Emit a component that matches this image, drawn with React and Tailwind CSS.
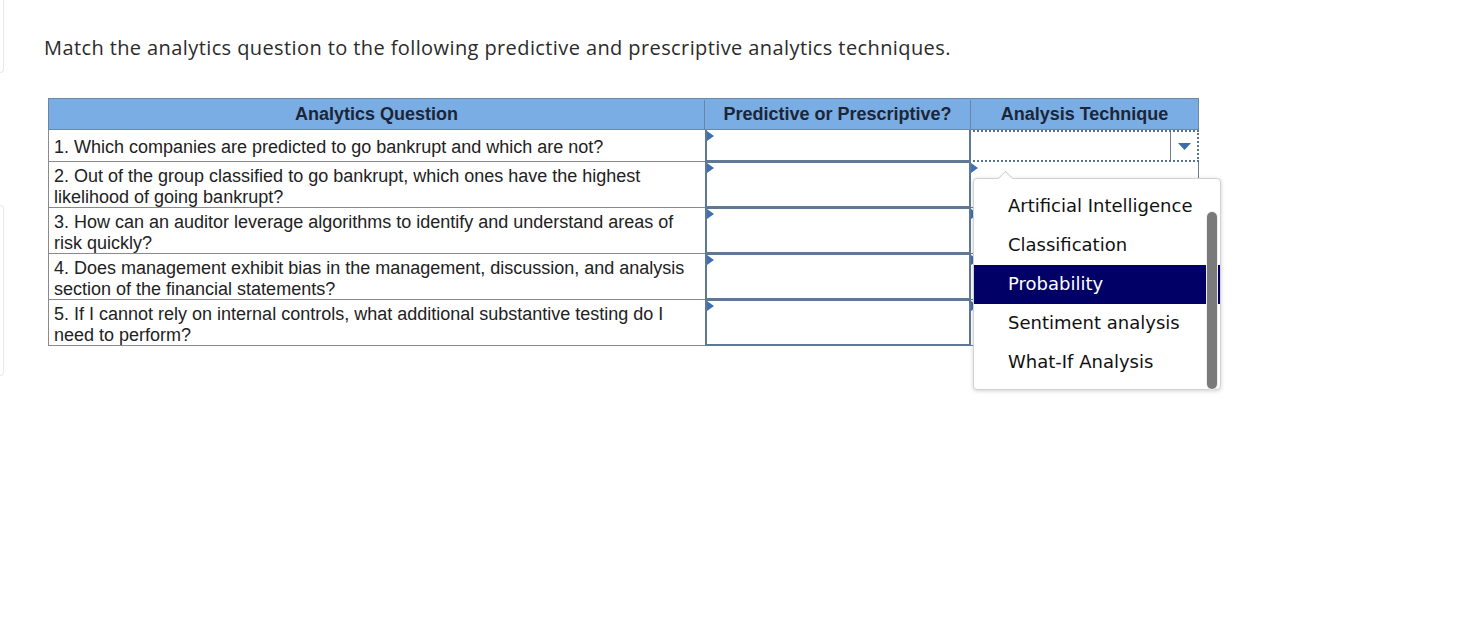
import React from 'react';

const questions = [
  { text: '1. Which companies are predicted to go bankrupt and which are not?', h: 'h-[32px]' },
  { text: '2. Out of the group classified to go bankrupt, which ones have the highest likelihood of going bankrupt?', h: 'h-[46px]' },
  { text: '3. How can an auditor leverage algorithms to identify and understand areas of risk quickly?', h: 'h-[46px]' },
  { text: '4. Does management exhibit bias in the management, discussion, and analysis section of the financial statements?', h: 'h-[46px]' },
  { text: '5. If I cannot rely on internal controls, what additional substantive testing do I need to perform?', h: 'h-[46px]' },
];

const options = ['Artificial Intelligence', 'Classification', 'Probability', 'Sentiment analysis', 'What-If Analysis'];

function Marker() {
  return (
    <svg className="absolute left-0 top-[1px]" width="7" height="10" viewBox="0 0 7 10">
      <path d="M0 0 L7 5 L0 10 Z" fill="#3f70b4" />
    </svg>
  );
}

export default function App() {
  return (
    <div className="min-h-screen bg-white flex" style={{ fontFamily: '"Liberation Sans", Arial, sans-serif' }}>
      {/* clipped neighbour cards on the left edge */}
      <div className="w-[4px] shrink-0 flex flex-col">
        <div className="h-[73px] border-r border-b border-[#e8e8e8] rounded-br-[4px]" />
        <div className="h-[132px]" />
        <div className="h-[171px] border-r border-t border-b border-[#e8e8e8] rounded-r-[4px]" />
      </div>

      <div className="pl-[40px] pt-[34px]">
        <p className="text-[20px] leading-[28px] text-[#2b2b2b] tracking-[0.4px]" style={{ fontFamily: '"Open Sans", Lato, sans-serif' }}>
          Match the analytics question to the following predictive and prescriptive analytics techniques.
        </p>

        <div className="relative ml-[4px] mt-[36px] w-[1151px]">
          {/* header */}
          <div className="flex h-[32px] bg-[#7aade4] border border-[#6c87a3] pt-[1px] text-[18px] font-bold text-[#1c2636]">
            <div className="w-[656px] flex items-center justify-center border-r border-[#6c87a3]">Analytics Question</div>
            <div className="w-[266px] flex items-center justify-center border-r border-[#6c87a3]">Predictive or Prescriptive?</div>
            <div className="flex-1 flex items-center justify-center">Analysis Technique</div>
          </div>

          {questions.map((q, i) => (
            <div key={i} className={`flex ${q.h}`}>
              <div className="w-[657px] shrink-0 flex items-center border-l border-b border-[#8a8a8a] px-[5px] pt-[4px] text-[18px] leading-[21px] text-[#222]">
                <span>{q.text}</span>
              </div>
              <div className="relative w-[266px] shrink-0 border-2 border-t-0 border-[#5f7893] bg-white">
                {i > 0 && <div className="h-[1px] bg-[#5f7893]" />}
                <Marker />
              </div>
              {i === 0 ? (
                <div className="flex-1 flex border-2 border-dotted border-[#5a7390] -ml-[2px]">
                  <div className="flex-1" />
                  <div className="w-[27px] border-l border-[#6c7f94] flex items-center justify-center">
                    <svg width="13" height="7" viewBox="0 0 13 7">
                      <path d="M0 0 L13 0 L6.5 7 Z" fill="#3d6aa8" />
                    </svg>
                  </div>
                </div>
              ) : (
                <div className="relative flex-1 border-r border-b border-[#6c7f94]">
                  <Marker />
                </div>
              )}
            </div>
          ))}

          {/* open dropdown menu */}
          <div className="absolute left-[925px] top-[80px] w-[248px] h-[212px] bg-white border border-[#d2d2d2] rounded-[4px] shadow-[0_1px_4px_rgba(0,0,0,0.18)] pt-[8px]">
            <div className="absolute left-[26px] -top-[6px] w-[11px] h-[11px] rotate-45 bg-white border-l border-t border-[#d2d2d2]" />
            {options.map((o) => (
              <div
                key={o}
                className={`relative h-[39px] flex items-center pl-[34px] pb-[2px] text-[18px] ${o === 'Probability' ? 'bg-[#000066] text-white' : 'text-[#111]'}`}
                style={{ fontFamily: '"DejaVu Sans", Verdana, sans-serif' }}
              >
                {o}
              </div>
            ))}
            <div className="absolute right-[3px] top-[33px] bottom-[0px] w-[10px] rounded-full bg-[#7a7a7a] ring-1 ring-[#eeeeee]" />
          </div>
        </div>
      </div>
    </div>
  );
}
